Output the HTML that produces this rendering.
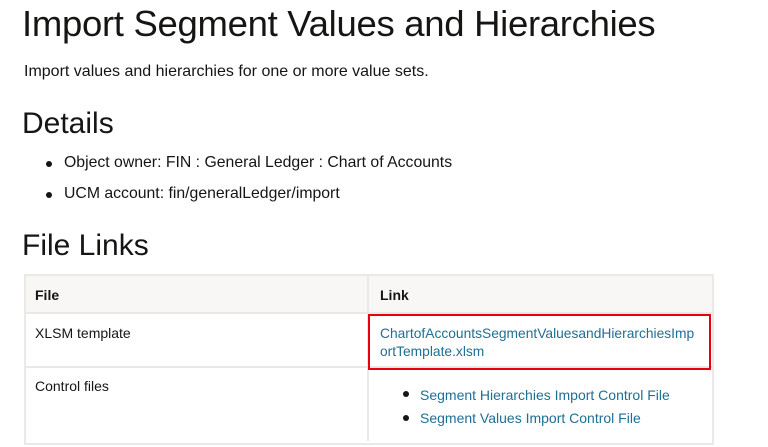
<!DOCTYPE html>
<html><head><meta charset="utf-8"><style>
body{margin:0;width:768px;height:447px;background:#fff;font-family:"Liberation Sans",sans-serif;color:#161513;position:relative;overflow:hidden}
.a{position:absolute;white-space:nowrap}
.t{font-size:15.8px}
.link{color:#1f6f94}
.dot{position:absolute;width:6px;height:6px;border-radius:50%;background:#161513}
</style></head><body>
<div class="a" style="left:22px;top:3px;font-size:36.5px;letter-spacing:-0.3px">Import Segment Values and Hierarchies</div>
<div class="a" style="left:24px;top:63px;font-size:16px">Import values and hierarchies for one or more value sets.</div>
<div class="a" style="left:22px;top:107px;font-size:30px">Details</div>
<div class="dot" style="left:46px;top:161px"></div>
<div class="a t" style="left:64px;top:154px">Object owner: FIN : General Ledger : Chart of Accounts</div>
<div class="dot" style="left:46px;top:192px"></div>
<div class="a t" style="left:64px;top:185px">UCM account: fin/generalLedger/import</div>
<div class="a" style="left:22px;top:229px;font-size:30px">File Links</div>
<div style="position:absolute;left:24px;top:274px;width:686px;height:167px;border:2px solid #ebe9e6"></div>
<div style="position:absolute;left:26px;top:276px;width:686px;height:36px;background:#f8f7f5;border-bottom:2px solid #ebe9e6"></div>
<div style="position:absolute;left:26px;top:366px;width:686px;height:2px;background:#ebe9e6"></div>
<div style="position:absolute;left:367px;top:276px;width:2px;height:165px;background:#ebe9e6"></div>
<div class="a" style="left:35px;top:287px;font-size:14px;font-weight:bold">File</div>
<div class="a" style="left:380px;top:287px;font-size:14px;font-weight:bold">Link</div>
<div class="a" style="left:35px;top:325px;font-size:14px">XLSM template</div>
<div class="a" style="left:35px;top:378px;font-size:14px">Control files</div>
<div style="position:absolute;left:368px;top:314px;width:339px;height:52px;border:2.5px solid #e8000e"></div>
<div class="a link" style="left:380px;top:325px;font-size:13.8px;line-height:18px">ChartofAccountsSegmentValuesandHierarchiesImp<br>ortTemplate.xlsm</div>
<div class="dot" style="left:403px;top:391px"></div>
<div class="a link" style="left:420px;top:387px;font-size:14px">Segment Hierarchies Import Control File</div>
<div class="dot" style="left:403px;top:415px"></div>
<div class="a link" style="left:420px;top:410px;font-size:14px">Segment Values Import Control File</div>
</body></html>
